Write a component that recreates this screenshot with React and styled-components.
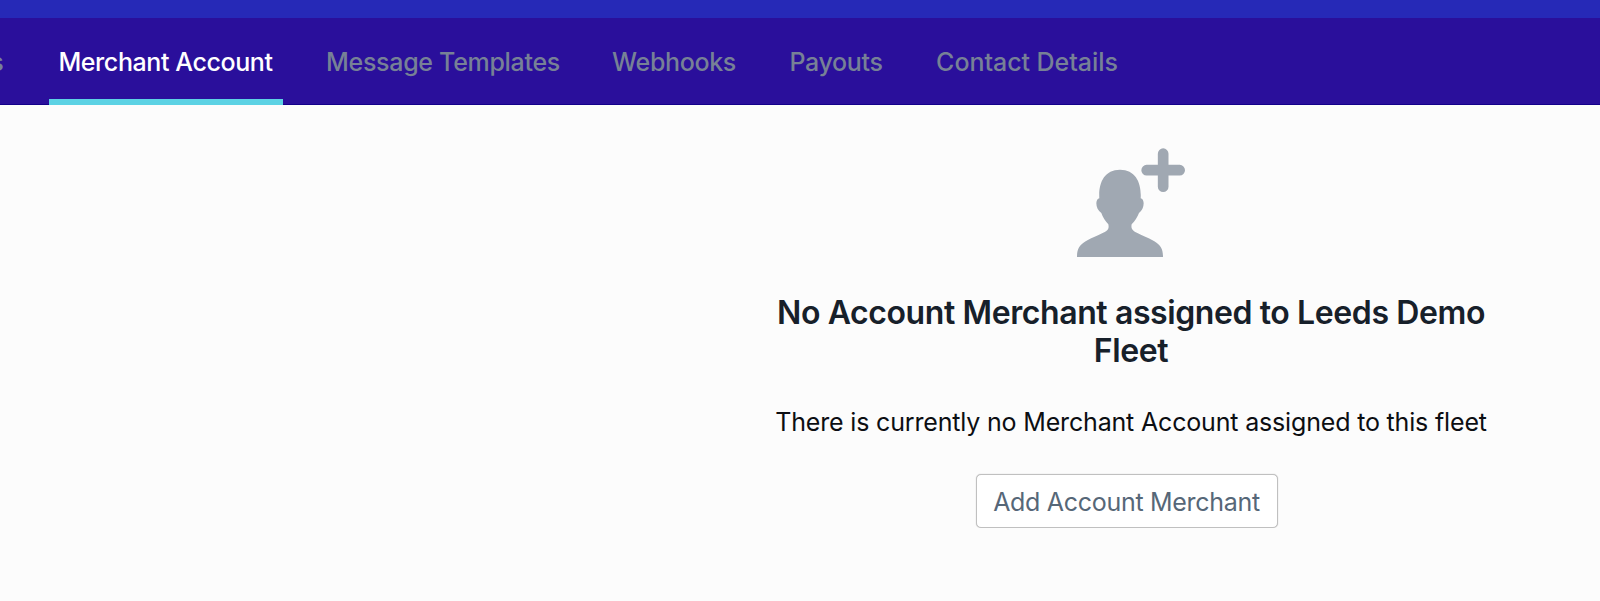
import React from 'react';
import { useState } from 'react';
import styled, { createGlobalStyle } from 'styled-components'

const GlobalStyle = createGlobalStyle`
* {
    box-sizing: border-box;
}

body {
    margin: 0;
    overflow: hidden;
    background: #FCFCFC;
    font-family: Inter, "Liberation Sans", sans-serif;
}
`

const TopBar = styled.div`
height: 18px;

background: #2629B7;
`

const Nav = styled.nav`
display: flex;
gap: 36px;
height: 87px;
overflow: hidden;

background: #2A0F9B;
box-shadow: inset 0 -1px 0 #13008A;
`

const Tab = styled.button`
display: flex;
align-items: center;
justify-content: center;
flex: none;
width: ${props => props.$width}px;
height: 87px;
padding: 7px 1px 0 0;
margin-left: ${props => props.$shift || 0}px;
border: 0;
border-bottom: 6px solid ${props => props.$active ? "#5CD2E4" : "transparent"};

background: none;
color: ${props => props.$active ? "#FFFFFF" : "#778196"};
font-family: inherit;
font-weight: ${props => props.$active ? 500 : 450};
font-size: 25px;
line-height: 32px;
letter-spacing: ${props => props.$spacing}px;
white-space: nowrap;
cursor: pointer;
`

const Empty = styled.main`
display: flex;
flex-direction: column;
align-items: center;
width: 740px;
margin-left: 761px;
padding-top: 43px;
`

const StyleIcon = styled.svg`
width: 108px;
height: 109px;
overflow: visible;

fill: #A0A8B2;
`

const Title = styled.h1`
margin: 37px 0 0;

font-weight: 600;
font-size: 32px;
line-height: 38px;
letter-spacing: -0.4px;
text-align: center;
color: #17202A;
`

const Text = styled.p`
margin: 36px 0 0;

font-weight: 400;
font-size: 25px;
line-height: 32px;
letter-spacing: -0.17px;
white-space: nowrap;
color: #0C0E12;
`

const AddButton = styled.button`
width: 302px;
height: 54px;
margin: 36px 9px 0 0;
padding: 1px 0 0;

background: #FFFFFF;
border: 1px solid #C0C0C0;
border-radius: 5px;
box-shadow: 0 0 1px rgba(0, 0, 0, 0.3);
color: #566778;
font-family: inherit;
font-size: 25px;
line-height: 32px;
letter-spacing: -0.3px;
white-space: nowrap;
cursor: pointer;
`

const tabs = [
    { name: "s", width: 13, spacing: 0, shift: -9 },
    { name: "Merchant Account", width: 234, spacing: -0.4, shift: 9 },
    { name: "Message Templates", width: 249, spacing: -0.3 },
    { name: "Webhooks", width: 141, spacing: -0.35 },
    { name: "Payouts", width: 111, spacing: -0.35 },
    { name: "Contact Details", width: 199, spacing: -0.05 },
]

const AddUserIcon = () => (
    <StyleIcon viewBox="51 39 324 327">
        <path d="M51 366C51 344 57 331 77 319C98 306 126 297 138 289C146 283 147 277 145 268C136 258 128 246 124 234C114 228 109 216 109 205C109 197 113 191 118 190C115 145 132 104 180 104C228 104 245 145 242 190C247 191 251 197 251 205C251 216 246 228 237 234C232 246 225 258 215 268C213 277 215 283 222 289C234 297 262 306 283 319C303 331 309 344 309 366Z" />
        <path d="M309.500 56V155M260 105.500H359" fill="none" stroke="#A0A8B2" strokeWidth="32" strokeLinecap="round" />
    </StyleIcon>
)

const App = () => {
    const [active, setActive] = useState("Merchant Account")
    return <>
        <GlobalStyle />
        <TopBar />
        <Nav>
            {tabs.map(tab => <Tab key={tab.name} $width={tab.width} $spacing={tab.spacing} $shift={tab.shift} $active={active === tab.name} onClick={() => setActive(tab.name)}>{tab.name}</Tab>)}
        </Nav>
        <Empty>
            <AddUserIcon />
            <Title>No Account Merchant assigned to Leeds Demo Fleet</Title>
            <Text>There is currently no Merchant Account assigned to this fleet</Text>
            <AddButton>Add Account Merchant</AddButton>
        </Empty>
    </>
}

export default App
